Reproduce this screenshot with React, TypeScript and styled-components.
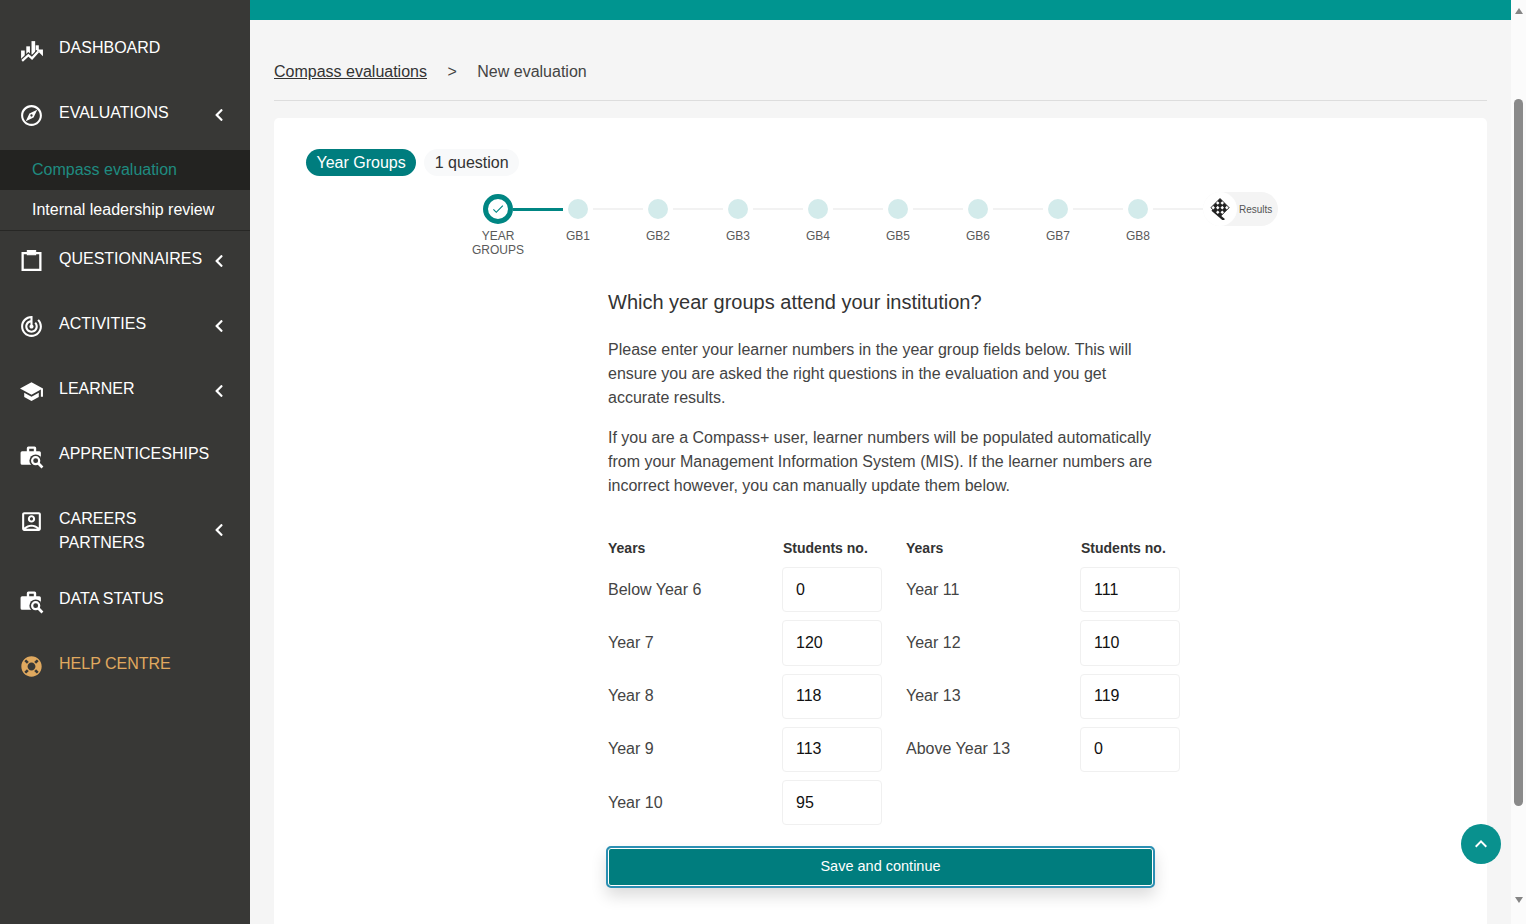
import React from 'react'
import styled, { createGlobalStyle } from 'styled-components'
import { FaChevronLeft, FaLifeRing } from 'react-icons/fa'
import {
    MdCheck,
    MdKeyboardArrowUp,
    MdOutlineAccountBox,
    MdOutlineExplore,
    MdSchool,
    MdTrackChanges,
} from 'react-icons/md'

const GlobalStyle = createGlobalStyle`
    html, body {
        margin: 0;
        padding: 0;
        height: 100%;
        overflow: hidden;
        font-family: "Liberation Sans", Arial, sans-serif;
    }
    * {
        box-sizing: border-box;
    }
`

const SShell = styled.div`
    position: relative;
    display: flex;
    width: 100%;
    height: 100vh;
    overflow: hidden;
`

const SSidebar = styled.nav`
    flex: 0 0 250px;
    padding-top: 15px;
    background-color: #383836;
`

const SItem = styled.div<{ $wrap?: boolean; $help?: boolean }>`
    display: flex;
    align-items: center;
    padding: 21px 0 ${(p) => (p.$wrap ? '11px' : '20px')} 19px;
    font-size: 16px;
    line-height: 24px;
    color: ${(p) => (p.$help ? '#e0a95f' : '#ffffff')};
`

const SIcon = styled.span`
    flex: 0 0 25px;
    display: flex;
    align-items: center;
    justify-content: center;
    align-self: flex-start;
    height: 24px;
    margin: 2px 15px -2px 0;
    font-size: 25px;
`

const SLabel = styled.span`
    width: 146px;
    white-space: pre-line;
`

const SChevron = styled.span<{ $wrap?: boolean }>`
    display: flex;
    margin-left: 7px;
    margin-top: ${(p) => (p.$wrap ? '-3px' : '3px')};
    font-size: 14px;
    color: #ffffff;
`

const SSubList = styled.div`
    margin: 5px 0 -5px;
    border-bottom: 1px solid #272725;
`

const SSubItem = styled.div<{ $active?: boolean }>`
    height: 40px;
    padding-left: 32px;
    font-size: 16px;
    line-height: 39px;
    color: ${(p) => (p.$active ? '#1f8b80' : '#ffffff')};
    background-color: ${(p) => (p.$active ? '#232321' : 'transparent')};
`

const SMain = styled.main`
    flex: 1;
    min-width: 0;
    background-color: #f5f5f5;
`

const STopBar = styled.div`
    height: 20px;
    background-color: #009590;
`

const SBody = styled.div`
    padding: 0 24px;
`

const SBreadcrumb = styled.div`
    display: flex;
    gap: 20.5px;
    padding: 40px 0 16px;
    margin-bottom: 17px;
    border-bottom: 1px solid #dddddd;
    font-size: 16px;
    line-height: 24px;
    color: #444444;
`

const SCrumbLink = styled.a`
    color: #333333;
    text-decoration: underline;
`

const SCard = styled.section`
    height: 900px;
    padding: 31px 32px;
    background-color: #ffffff;
    border-radius: 5px;
`

const SPills = styled.div`
    display: flex;
    gap: 8px;
`

const SPill = styled.span<{ $active?: boolean }>`
    height: 27px;
    padding: 0 10.5px;
    border-radius: 14px;
    font-size: 16px;
    line-height: 27px;
    color: ${(p) => (p.$active ? '#ffffff' : '#333333')};
    background-color: ${(p) => (p.$active ? '#007d7e' : '#f8f9fa')};
`

const SStepper = styled.div`
    display: flex;
    margin: 16px 0 33px 152px;
`

const SStep = styled.div`
    position: relative;
    flex: 0 0 80px;
    display: flex;
    flex-direction: column;
    align-items: center;
`

const SStepDotRow = styled.div`
    display: flex;
    align-items: center;
    justify-content: center;
    height: 34px;
    margin-bottom: 3px;

    &::after {
        content: '';
        position: absolute;
        top: 16px;
        left: 55px;
        width: 50px;
        height: 2px;
        background-color: #f2f2f2;
    }
`

const SActiveDotRow = styled(SStepDotRow)`
    &::after {
        top: 15.5px;
        height: 3px;
        background-color: #008683;
    }
`

const SDot = styled.span`
    width: 20px;
    height: 20px;
    border-radius: 50%;
    background-color: #d3ebeb;
`

const SActiveDot = styled.span`
    display: flex;
    align-items: center;
    justify-content: center;
    width: 30px;
    height: 30px;
    border: 5px solid #008683;
    border-radius: 50%;
    font-size: 14px;
    color: #008683;
    background-color: #ffffff;
`

const SStepLabel = styled.span`
    font-size: 12px;
    line-height: 14px;
    text-align: center;
    color: #5a5a5a;
`

const SResults = styled.div`
    flex: 0 0 75px;
    display: flex;
    align-items: center;
    height: 34px;
    margin-left: 25px;
    border-radius: 17px;
    background-color: #f4f4f4;
    font-size: 10px;
    color: #555555;
`

const SResultsIcon = styled.span`
    display: flex;
    align-items: center;
    justify-content: center;
    flex: 0 0 34px;
    height: 34px;
    margin-right: 2px;
    border-radius: 50%;
    background-color: #ffffff;
`

const SContent = styled.div`
    width: 549px;
    margin: 0 auto;
`

const SQuestion = styled.h2`
    margin: 0 0 24px 2px;
    font-size: 20px;
    font-weight: 400;
    line-height: 24px;
    color: #333333;
`

const SText = styled.p`
    margin: 0 0 16px 2px;
    font-size: 16px;
    line-height: 24px;
    color: #444444;
`

const STable = styled.div`
    display: grid;
    grid-template-columns: 150px 100px 150px 100px;
    column-gap: 24px;
    row-gap: 8px;
    align-items: center;
    margin: 40px -25px 21px 2px;
`

const SHeaderCell = styled.div<{ $field?: boolean }>`
    margin-bottom: 1px;
    padding-left: ${(p) => (p.$field ? '1px' : '0')};
    font-size: 14px;
    font-weight: 700;
    line-height: 20px;
    color: #333333;
`

const SRowLabel = styled.label`
    font-size: 16px;
    color: #444444;
`

const SInput = styled.input`
    width: 100px;
    height: 45.25px;
    padding: 0 13px;
    border: 1px solid #f0f0f0;
    border-radius: 4px;
    outline: none;
    font-family: inherit;
    font-size: 16px;
    color: #111111;
    background-color: #ffffff;
`

const SSaveButton = styled.button`
    display: block;
    width: 549px;
    height: 42px;
    padding: 0 0 2px;
    border: 2px solid #2b8fb3;
    border-radius: 5px;
    box-shadow: inset 0 0 0 1px #ffffff, 0 8px 16px rgba(0, 0, 0, 0.14);
    font-family: inherit;
    font-size: 14.5px;
    color: #ffffff;
    background-color: #007d7e;
`

const SScrollbar = styled.div`
    flex: 0 0 15px;
    display: flex;
    flex-direction: column;
    align-items: center;
    background-color: #fbfbfb;
`

const SArrow = styled.span<{ $down?: boolean }>`
    width: 0;
    height: 0;
    margin: ${(p) => (p.$down ? '91px 0 0' : '8px 0 0')};
    border-left: 4.5px solid transparent;
    border-right: 4.5px solid transparent;
    border-bottom: ${(p) => (p.$down ? '0' : '6px solid #858585')};
    border-top: ${(p) => (p.$down ? '6px solid #858585' : '0')};
`

const SThumb = styled.div`
    width: 9px;
    height: 707px;
    margin-top: 85px;
    border-radius: 5px;
    background-color: #8a8a8a;
`

const SToTop = styled.button`
    position: absolute;
    left: 1461px;
    top: 824px;
    display: flex;
    align-items: center;
    justify-content: center;
    width: 40px;
    height: 40px;
    padding: 0;
    border: 0;
    border-radius: 50%;
    font-size: 24px;
    color: #ffffff;
    background-color: #09918e;
`

const DashboardIcon = () => (
    <svg width="25" height="25" viewBox="0 0 24 24" fill="#fff">
        <rect x="2" y="12" width="3.500" height="9" />
        <rect x="7" y="8" width="3.500" height="9" />
        <rect x="12" y="3" width="3.500" height="13" />
        <rect x="16" y="7" width="3" height="5" />
        <path d="M3 22 9 16.500l3.500 3 6-6.500" fill="none" stroke="#383836" strokeWidth="4.500" />
        <path d="M3 22 9 16.500l3.500 3 6-6.500" fill="none" stroke="#fff" strokeWidth="2.200" />
        <path d="M16.500 11H23v6.500z" />
    </svg>
)

const ClipboardIcon = () => (
    <svg width="25" height="25" viewBox="0 0 24 24" fill="none" stroke="#fff" strokeWidth="2.200">
        <path d="M8 4H3.500v16h17V4H16" />
        <rect x="8" y="1.500" width="8" height="4" fill="#fff" strokeWidth="1" />
    </svg>
)

const BriefcaseSearchIcon = () => (
    <svg width="25" height="25" viewBox="0 0 24 24" fill="#fff">
        <path d="M7.500 4A1.500 1.500 0 0 1 9 2.500h6A1.500 1.500 0 0 1 16.500 4v3h3A1.500 1.500 0 0 1 21 8.500V20H3A1.500 1.500 0 0 1 1.500 18.500v-10A1.500 1.500 0 0 1 3 7h4.500zM9.800 4.500V7h4.400V4.500z" />
        <circle cx="16" cy="16" r="6" fill="#383836" />
        <circle cx="16" cy="16" r="3.400" fill="none" stroke="#fff" strokeWidth="2.100" />
        <path d="m18.500 18.500 4 4" stroke="#fff" strokeWidth="2.600" />
    </svg>
)

const flagCells = [0, 1, 2, 3].flatMap((r) => [0, 1, 2, 3].map((c) => ({ r, c }))).filter((cell) => (cell.r + cell.c) % 2 === 1)

const ResultsFlagIcon = () => (
    <svg width="22" height="22" viewBox="0 0 24 24">
        <path d="M3.500 13 16.500 24" stroke="#222" strokeWidth="2.600" />
        <g transform="rotate(45 12 10.500)">
            <rect x="5" y="3.500" width="14" height="14" fill="#222" stroke="#222" strokeWidth="1" />
            {flagCells.map((cell) => (
                <rect key={`${cell.r}-${cell.c}`} x={5.400 + cell.c * 3.500} y={3.900 + cell.r * 3.500} width="2.700" height="2.700" fill="#fff" />
            ))}
        </g>
    </svg>
)

type NavEntry = {
    label: string
    icon: React.ReactNode
    chevron?: boolean
    wrap?: boolean
    help?: boolean
}

const navTop: NavEntry[] = [
    { label: 'DASHBOARD', icon: <DashboardIcon /> },
    { label: 'EVALUATIONS', icon: <MdOutlineExplore />, chevron: true },
]

const navBottom: NavEntry[] = [
    { label: 'QUESTIONNAIRES', icon: <ClipboardIcon />, chevron: true },
    { label: 'ACTIVITIES', icon: <MdTrackChanges />, chevron: true },
    { label: 'LEARNER', icon: <MdSchool />, chevron: true },
    { label: 'APPRENTICESHIPS', icon: <BriefcaseSearchIcon /> },
    { label: 'CAREERS\nPARTNERS', icon: <MdOutlineAccountBox />, chevron: true, wrap: true },
    { label: 'DATA STATUS', icon: <BriefcaseSearchIcon /> },
    { label: 'HELP CENTRE', icon: <FaLifeRing size={21} />, help: true },
]

const steps = ['GB1', 'GB2', 'GB3', 'GB4', 'GB5', 'GB6', 'GB7', 'GB8']

const rows = [
    ['Below Year 6', '0', 'Year 11', '111'],
    ['Year 7', '120', 'Year 12', '110'],
    ['Year 8', '118', 'Year 13', '119'],
    ['Year 9', '113', 'Above Year 13', '0'],
    ['Year 10', '95'],
]

function NavItem({ entry }: { entry: NavEntry }) {
    return (
        <SItem $wrap={entry.wrap} $help={entry.help}>
            <SIcon>{entry.icon}</SIcon>
            <SLabel>{entry.label}</SLabel>
            {entry.chevron && (
                <SChevron $wrap={entry.wrap}>
                    <FaChevronLeft />
                </SChevron>
            )}
        </SItem>
    )
}

export default function App() {
    return (
        <SShell>
            <GlobalStyle />
            <SSidebar>
                {navTop.map((entry) => (
                    <NavItem key={entry.label} entry={entry} />
                ))}
                <SSubList>
                    <SSubItem $active>Compass evaluation</SSubItem>
                    <SSubItem>Internal leadership review</SSubItem>
                </SSubList>
                {navBottom.map((entry) => (
                    <NavItem key={entry.label} entry={entry} />
                ))}
            </SSidebar>

            <SMain>
                <STopBar />
                <SBody>
                    <SBreadcrumb>
                        <SCrumbLink>Compass evaluations</SCrumbLink>
                        <span>&gt;</span>
                        <span>New evaluation</span>
                    </SBreadcrumb>
                    <SCard>
                        <SPills>
                            <SPill $active>Year Groups</SPill>
                            <SPill>1 question</SPill>
                        </SPills>

                        <SStepper>
                            <SStep>
                                <SActiveDotRow>
                                    <SActiveDot>
                                        <MdCheck />
                                    </SActiveDot>
                                </SActiveDotRow>
                                <SStepLabel>
                                    YEAR
                                    <br />
                                    GROUPS
                                </SStepLabel>
                            </SStep>
                            {steps.map((step) => (
                                <SStep key={step}>
                                    <SStepDotRow>
                                        <SDot />
                                    </SStepDotRow>
                                    <SStepLabel>{step}</SStepLabel>
                                </SStep>
                            ))}
                            <SResults>
                                <SResultsIcon>
                                    <ResultsFlagIcon />
                                </SResultsIcon>
                                Results
                            </SResults>
                        </SStepper>

                        <SContent>
                            <SQuestion>Which year groups attend your institution?</SQuestion>
                            <SText>
                                Please enter your learner numbers in the year group fields below. This will
                                ensure you are asked the right questions in the evaluation and you get
                                accurate results.
                            </SText>
                            <SText>
                                If you are a Compass+ user, learner numbers will be populated automatically
                                from your Management Information System (MIS). If the learner numbers are
                                incorrect however, you can manually update them below.
                            </SText>

                            <STable>
                                <SHeaderCell>Years</SHeaderCell>
                                <SHeaderCell $field>Students no.</SHeaderCell>
                                <SHeaderCell>Years</SHeaderCell>
                                <SHeaderCell $field>Students no.</SHeaderCell>
                                {rows.map((row) => (
                                    <React.Fragment key={row[0]}>
                                        <SRowLabel>{row[0]}</SRowLabel>
                                        <SInput defaultValue={row[1]} />
                                        {row[2] && (
                                            <>
                                                <SRowLabel>{row[2]}</SRowLabel>
                                                <SInput defaultValue={row[3]} />
                                            </>
                                        )}
                                    </React.Fragment>
                                ))}
                            </STable>

                            <SSaveButton>Save and continue</SSaveButton>
                        </SContent>
                    </SCard>
                </SBody>
            </SMain>

            <SScrollbar>
                <SArrow />
                <SThumb />
                <SArrow $down />
            </SScrollbar>

            <SToTop>
                <MdKeyboardArrowUp />
            </SToTop>
        </SShell>
    )
}
